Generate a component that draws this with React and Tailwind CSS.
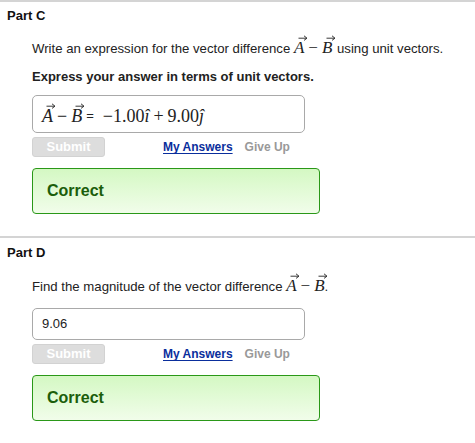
import React from "react";

const sans = { fontFamily: '"Liberation Sans", Arial, sans-serif' };
const serif = { fontFamily: '"Liberation Serif", "Times New Roman", serif' };

function Vec({ ch }) {
  return (
    <span className="relative inline-block italic leading-none" style={serif}>
      {ch}
      <svg className="absolute left-[4px] top-[-4px]" width="10" height="6" viewBox="0 0 10 6">
        <path d="M0.5 3.2 H8.5" stroke="#222" strokeWidth="0.9" fill="none" />
        <path d="M6 0.8 L9 3.2 L6 5.4" stroke="#222" strokeWidth="0.9" fill="none" />
      </svg>
    </span>
  );
}

function MathAB({ size = "text-[17px]" }) {
  return (
    <span className={`${size} leading-none text-[#222]`} style={serif}>
      <Vec ch="A" />
      <span className="mx-[4px]">−</span>
      <Vec ch="B" />
    </span>
  );
}

function Buttons() {
  return (
    <div className="mt-[4px] flex items-center h-[20px]">
      <div className="w-[73px] h-[20px] rounded-[3px] bg-[#dddddd] border border-[#d2d2d2] flex items-center justify-center text-white font-bold text-[13px]">
        Submit
      </div>
      <span className="ml-[58px] text-[12px] font-bold text-[#0a2e9c] underline underline-offset-2">My Answers</span>
      <span className="ml-[12px] text-[12px] font-bold text-[#999999]">Give Up</span>
    </div>
  );
}

function Correct() {
  return (
    <div className="mt-[11px] w-[288px] h-[46px] rounded-[4px] border border-[#2a9818] bg-gradient-to-b from-[#d4f8c3] to-[#f1fdea] flex items-center pl-[14px]">
      <span className="text-[16px] font-bold text-[#1b5e0b]">Correct</span>
    </div>
  );
}

export default function App() {
  return (
    <div className="w-[475px] h-[443px] bg-white text-[#222] overflow-hidden" style={sans}>
      <div className="border-t-2 border-[#d4d4d4]">
        <div className="pt-[6px] pl-[7px] h-[22px] text-[13px] leading-[16px] font-bold text-[#111]">Part C</div>
        <div className="pl-[32px]">
          <div className="mt-[15px] h-[16px] text-[13.2px] leading-[16px] whitespace-nowrap">
            Write an expression for the vector difference <MathAB /> <span className="ml-[1px]">using unit vectors.</span>
          </div>
          <div className="mt-[14px] h-[16px] text-[13px] leading-[16px] font-bold">Express your answer in terms of unit vectors.</div>
          <div className="mt-[10px] w-[273px] h-[38px] rounded-[5px] border border-[#a9a9a9] flex items-center pl-[9px] pt-[3px]">
            <MathAB size="text-[18px]" />
            <span className="ml-[4px] text-[13px]">=</span>
            <span className="ml-[9px] text-[18px] leading-none" style={serif}>
              −1.00<span className="italic">î</span>
              <span className="mx-[4px]">+</span>9.00<span className="italic">ĵ</span>
            </span>
          </div>
          <Buttons />
          <Correct />
        </div>
      </div>
      <div className="mt-[22px] border-t-2 border-[#d4d4d4]">
        <div className="pt-[7px] pl-[7px] h-[24px] text-[13px] leading-[16px] font-bold text-[#111]">Part D</div>
        <div className="pl-[32px]">
          <div className="mt-[15px] h-[16px] text-[13.2px] leading-[16px] whitespace-nowrap">
            Find the magnitude of the vector difference <MathAB />.
          </div>
          <div className="mt-[15px] w-[273px] h-[32px] rounded-[5px] border border-[#a9a9a9] flex items-center pl-[9px] text-[13px]">
            9.06
          </div>
          <Buttons />
          <Correct />
        </div>
      </div>
    </div>
  );
}
